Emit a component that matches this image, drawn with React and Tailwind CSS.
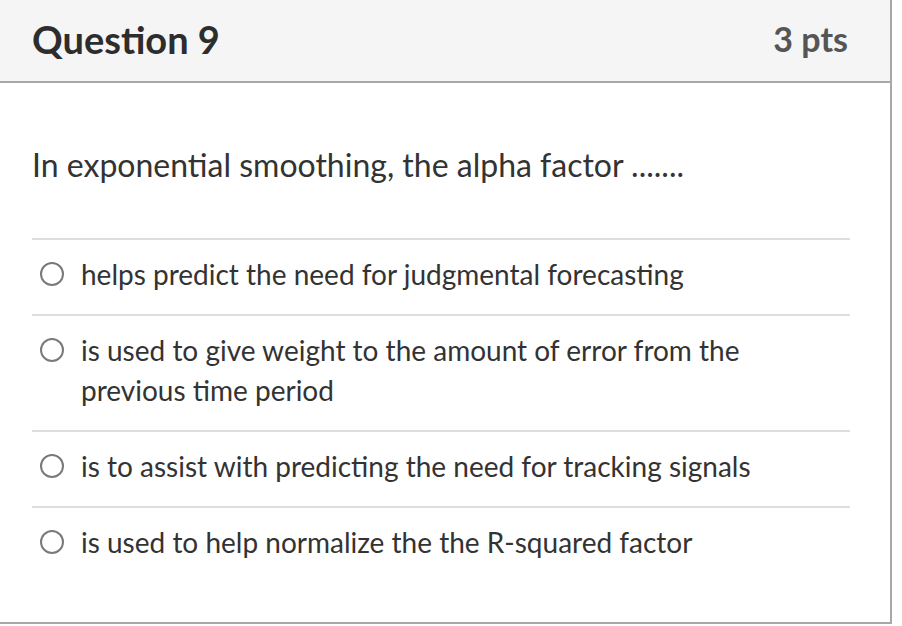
import React from 'react';

const answers = [
  'helps predict the need for judgmental forecasting',
  'is used to give weight to the amount of error from the previous time period',
  'is to assist with predicting the need for tracking signals',
  'is used to help normalize the the R-squared factor',
];

const App = () => {
  return (
    <div className="w-[902px] h-[626px] bg-white" style={{ fontFamily: 'Lato, "Open Sans", sans-serif' }}>
      <div className="w-[892px] h-[624px] border-r-2 border-b-2 border-[#a8a8a8] flex flex-col">
        {/* Header */}
        <div className="h-[83px] bg-[#f5f5f5] border-b-2 border-[#a8a8a8] flex items-center justify-between pl-[32px] pr-[42px] pb-[3px]">
          <h2 className="text-[38px] font-bold text-[#2d2d2d] leading-none">Question 9</h2>
          <span className="text-[34px] font-bold text-[#555555] leading-none">3 pts</span>
        </div>

        {/* Body */}
        <div className="pl-[32px] pr-[40px] pt-[62px]">
          <p className="text-[32px] leading-[40px] text-[#333333]">
            In exponential smoothing, the alpha factor .......
          </p>

          <div className="mt-[53px]">
            {answers.map((a, i) => (
              <div key={i} className="flex items-start pt-[14px] pb-[20px] border-t-2 border-[#dddddd]">
                <div className="w-[49px] h-[40px] flex items-center pl-[8px] shrink-0">
                  <span className="block w-[24px] h-[24px] rounded-full border-2 border-[#7a7a7a] bg-white" />
                </div>
                <span className="text-[28px] leading-[40px] text-[#333333] max-w-[680px]">{a}</span>
              </div>
            ))}
          </div>
        </div>
      </div>
    </div>
  );
};

export default App;
